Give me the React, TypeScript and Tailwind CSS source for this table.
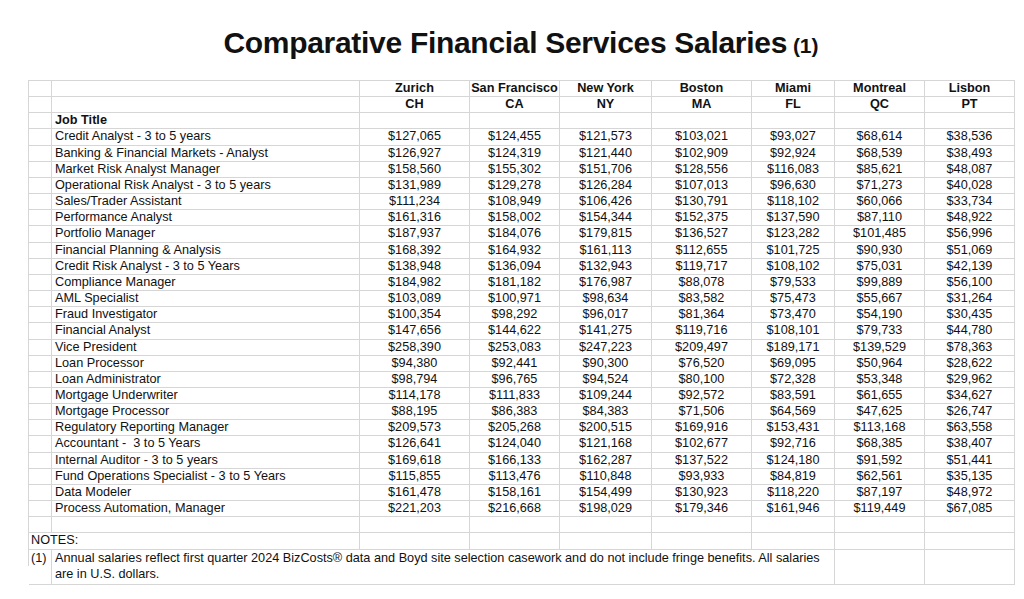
import React from "react";

const cities = [
  { name: "Zurich", code: "CH" },
  { name: "San Francisco", code: "CA" },
  { name: "New York", code: "NY" },
  { name: "Boston", code: "MA" },
  { name: "Miami", code: "FL" },
  { name: "Montreal", code: "QC" },
  { name: "Lisbon", code: "PT" },
];

const rows: [string, string[]][] = [
  ["Credit Analyst - 3 to 5 years", ["$127,065", "$124,455", "$121,573", "$103,021", "$93,027", "$68,614", "$38,536"]],
  ["Banking & Financial Markets - Analyst", ["$126,927", "$124,319", "$121,440", "$102,909", "$92,924", "$68,539", "$38,493"]],
  ["Market Risk Analyst Manager", ["$158,560", "$155,302", "$151,706", "$128,556", "$116,083", "$85,621", "$48,087"]],
  ["Operational Risk Analyst - 3 to 5 years", ["$131,989", "$129,278", "$126,284", "$107,013", "$96,630", "$71,273", "$40,028"]],
  ["Sales/Trader Assistant", ["$111,234", "$108,949", "$106,426", "$130,791", "$118,102", "$60,066", "$33,734"]],
  ["Performance Analyst", ["$161,316", "$158,002", "$154,344", "$152,375", "$137,590", "$87,110", "$48,922"]],
  ["Portfolio Manager", ["$187,937", "$184,076", "$179,815", "$136,527", "$123,282", "$101,485", "$56,996"]],
  ["Financial Planning & Analysis", ["$168,392", "$164,932", "$161,113", "$112,655", "$101,725", "$90,930", "$51,069"]],
  ["Credit Risk Analyst - 3 to 5 Years", ["$138,948", "$136,094", "$132,943", "$119,717", "$108,102", "$75,031", "$42,139"]],
  ["Compliance Manager", ["$184,982", "$181,182", "$176,987", "$88,078", "$79,533", "$99,889", "$56,100"]],
  ["AML Specialist", ["$103,089", "$100,971", "$98,634", "$83,582", "$75,473", "$55,667", "$31,264"]],
  ["Fraud Investigator", ["$100,354", "$98,292", "$96,017", "$81,364", "$73,470", "$54,190", "$30,435"]],
  ["Financial Analyst", ["$147,656", "$144,622", "$141,275", "$119,716", "$108,101", "$79,733", "$44,780"]],
  ["Vice President", ["$258,390", "$253,083", "$247,223", "$209,497", "$189,171", "$139,529", "$78,363"]],
  ["Loan Processor", ["$94,380", "$92,441", "$90,300", "$76,520", "$69,095", "$50,964", "$28,622"]],
  ["Loan Administrator", ["$98,794", "$96,765", "$94,524", "$80,100", "$72,328", "$53,348", "$29,962"]],
  ["Mortgage Underwriter", ["$114,178", "$111,833", "$109,244", "$92,572", "$83,591", "$61,655", "$34,627"]],
  ["Mortgage Processor", ["$88,195", "$86,383", "$84,383", "$71,506", "$64,569", "$47,625", "$26,747"]],
  ["Regulatory Reporting Manager", ["$209,573", "$205,268", "$200,515", "$169,916", "$153,431", "$113,168", "$63,558"]],
  ["Accountant -  3 to 5 Years", ["$126,641", "$124,040", "$121,168", "$102,677", "$92,716", "$68,385", "$38,407"]],
  ["Internal Auditor - 3 to 5 years", ["$169,618", "$166,133", "$162,287", "$137,522", "$124,180", "$91,592", "$51,441"]],
  ["Fund Operations Specialist - 3 to 5 Years", ["$115,855", "$113,476", "$110,848", "$93,933", "$84,819", "$62,561", "$35,135"]],
  ["Data Modeler", ["$161,478", "$158,161", "$154,499", "$130,923", "$118,220", "$87,197", "$48,972"]],
  ["Process Automation, Manager", ["$221,203", "$216,668", "$198,029", "$179,346", "$161,946", "$119,449", "$67,085"]],
];

const cell = "border-r border-b border-[#d6d6d6] h-[16.17px] leading-[15px] whitespace-pre overflow-visible";

function App() {
  return (
    <div className="w-[1024px] h-[599px] bg-white text-[#111] font-['Liberation_Sans',Arial,sans-serif] overflow-hidden">
      {/* title */}
      <div className="w-[986px] ml-[28px] h-[80px] pt-[26px] text-center leading-[34px]">
        <span className="text-[30px] font-bold tracking-[-0.3px]">Comparative Financial Services Salaries</span>
        <span className="text-[21px] font-bold"> (1)</span>
      </div>

      <div className="ml-[28px] w-[987px] grid grid-cols-[23px_308px_110px_90px_92px_100px_83px_90px_90px] auto-rows-[16.17px] border-l border-t border-[#d6d6d6] text-[12.7px]">
        {/* city header */}
        <div className={cell} />
        <div className={cell} />
        {cities.map((c) => (
          <div key={c.name} className={`${cell} text-center font-bold`}>{c.name}</div>
        ))}
        <div className={cell} />
        <div className={cell} />
        {cities.map((c) => (
          <div key={c.code} className={`${cell} text-center font-bold`}>{c.code}</div>
        ))}
        <div className={cell} />
        <div className={`${cell} pl-[3px] font-bold`}>Job Title</div>
        {cities.map((c) => (
          <div key={c.code + "-e"} className={cell} />
        ))}

        {rows.map(([title, vals]) => (
          <React.Fragment key={title}>
            <div className={cell} />
            <div className={`${cell} pl-[3px]`}>{title}</div>
            {vals.map((v, i) => (
              <div key={i} className={`${cell} text-center`}>{v}</div>
            ))}
          </React.Fragment>
        ))}

        {/* blank row */}
        {Array.from({ length: 9 }).map((_, i) => (
          <div key={"b" + i} className={cell} />
        ))}

        {/* notes */}
        <div className={`${cell} col-span-2 pl-[2px]`}>NOTES:</div>
        {Array.from({ length: 7 }).map((_, i) => (
          <div key={"n" + i} className={cell} />
        ))}
        <div className="border-r border-b border-[#d6d6d6] h-[35.5px] leading-[16.5px] pl-[2px]">(1)</div>
        <div className="col-span-6 border-r border-b border-[#d6d6d6] h-[35.5px] leading-[16.5px] pl-[3px]">
          Annual salaries reflect first quarter 2024 BizCosts® data and Boyd site selection casework and do not include fringe benefits. All salaries
          <br />
          are in U.S. dollars.
        </div>
        <div className="border-r border-b border-[#d6d6d6] h-[35.5px]" />
        <div className="border-r border-b border-[#d6d6d6] h-[35.5px]" />
      </div>
    </div>
  );
}

export default App;
